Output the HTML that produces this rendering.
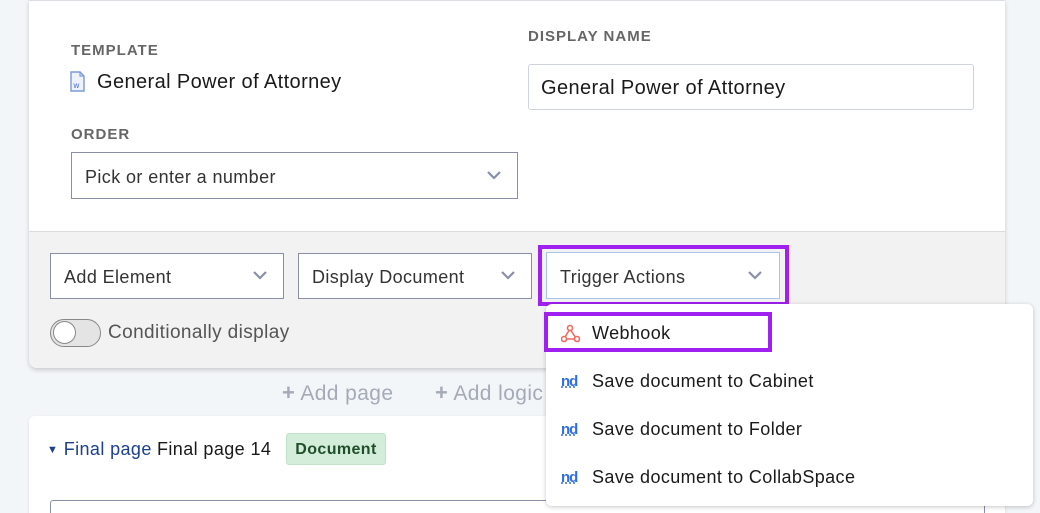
<!DOCTYPE html>
<html><head><meta charset="utf-8"><style>
*{box-sizing:border-box;margin:0;padding:0}
html,body{width:1040px;height:513px;overflow:hidden}
body{background:#f3f6f9;font-family:"Liberation Sans",sans-serif;position:relative;letter-spacing:0.4px}
.abs{position:absolute}
.lbl{font-size:15px;font-weight:bold;color:#666;letter-spacing:1px}
.sel{position:absolute;background:#fff;border:1px solid #8a8fa8;font-size:18px;color:#333;padding-left:13px;padding-top:3px;display:flex;align-items:center}
.chev{position:absolute;right:16px;top:50%;margin-top:-5px}
.item{position:absolute;left:15px;font-size:18px;color:#1a1a1a;display:flex;align-items:center}
.nd{font-size:15px;font-weight:bold;color:#2f6fe0;width:31px;letter-spacing:-1px;text-decoration:underline;text-decoration-style:dotted}
</style></head><body>
<div class="abs" style="left:29px;top:0;width:976px;height:368px;background:#fff;border-top:1px solid #dcdfe4;border-radius:0 0 8px 8px;box-shadow:0 2px 5px rgba(0,0,0,.18);overflow:hidden">
  <div class="abs" style="left:0;top:230px;width:976px;height:138px;background:#f2f2f2;border-top:1px solid #dcdcdc"></div>
</div>
<div class="abs lbl" style="left:71px;top:42px">TEMPLATE</div>
<svg class="abs" style="left:70px;top:71px" width="15" height="21" viewBox="0 0 15 21"><path d="M1 1h9l4 4v15H1z" fill="#eef3fb" stroke="#7a9ad6" stroke-width="1.4"/><path d="M10 1v4h4" fill="none" stroke="#7a9ad6" stroke-width="1.2"/><text x="3.5" y="17" font-size="8" fill="#3a6cc8" font-family="Liberation Sans">w</text></svg>
<div class="abs" style="left:97px;top:71px;font-size:20px;color:#1a1a1a">General Power of Attorney</div>
<div class="abs lbl" style="left:71px;top:126px">ORDER</div>
<div class="sel" style="left:71px;top:152px;width:447px;height:47px">Pick or enter a number<svg class="chev" width="14" height="9"><path d="M1 1l6 6 6-6" fill="none" stroke="#8a8fa8" stroke-width="2.2"/></svg></div>
<div class="abs lbl" style="left:528px;top:28px">DISPLAY NAME</div>
<div class="sel" style="left:528px;top:64px;width:446px;height:46px;border-color:#cfd3dc;border-radius:3px;font-size:20px;color:#1a1a1a;padding-left:12px">General Power of Attorney</div>

<div class="sel" style="left:50px;top:253px;width:234px;height:46px">Add Element<svg class="chev" width="14" height="9"><path d="M1 1l6 6 6-6" fill="none" stroke="#8a8fa8" stroke-width="2.2"/></svg></div>
<div class="sel" style="left:298px;top:253px;width:234px;height:46px">Display Document<svg class="chev" width="14" height="9"><path d="M1 1l6 6 6-6" fill="none" stroke="#8a8fa8" stroke-width="2.2"/></svg></div>
<div class="abs" style="left:538px;top:245px;width:251px;height:61px;border:4px solid #a020f0"></div>
<div class="sel" style="left:546px;top:252px;width:234px;height:47px;border-color:#a8c4ea">Trigger Actions<svg class="chev" style="right:17px" width="14" height="9"><path d="M1 1l6 6 6-6" fill="none" stroke="#8a8fa8" stroke-width="2.2"/></svg></div>

<div class="abs" style="left:50px;top:319px;width:51px;height:28px;border-radius:14px;background:#e4e4e4;border:1px solid #888"></div>
<div class="abs" style="left:53px;top:321px;width:23px;height:23px;border-radius:50%;background:#fff;border:1px solid #888"></div>
<div class="abs" style="left:108px;top:322px;font-size:19px;color:#555">Conditionally display</div>

<div class="abs" style="left:282px;top:380px;font-size:21px;color:#a4abb7"><b style="font-size:22px">+</b> Add page</div>
<div class="abs" style="left:435px;top:380px;font-size:21px;color:#a4abb7"><b style="font-size:22px">+</b> Add logic</div>

<div class="abs" style="left:29px;top:416px;width:976px;height:120px;background:#fff;border-radius:6px;box-shadow:0 1px 3px rgba(0,0,0,.1)"></div>
<div class="abs" style="left:47px;top:439px;font-size:18px;color:#1d3f8f"><span style="font-size:11px;vertical-align:2px">▼</span> Final page</div>
<div class="abs" style="left:157px;top:439px;font-size:18px;color:#1a1a1a">Final page 14</div>
<div class="abs" style="left:286px;top:433px;width:100px;height:32px;background:#d4ecda;border:1px solid #bfe2c8;border-radius:3px;font-size:16px;font-weight:bold;color:#1f4f2a;text-align:center;line-height:32px">Document</div>
<div class="abs" style="left:50px;top:500px;width:935px;height:30px;border:1px solid #8a8fa8;border-radius:3px"></div>

<div class="abs" style="left:546px;top:304px;width:487px;height:202px;background:#fff;border-radius:6px;box-shadow:0 1px 5px rgba(0,0,0,.22)">
  <div class="abs" style="left:-2px;top:8px;width:228px;height:40px;border:4px solid #a020f0"></div>
  <div class="item" style="top:19px"><svg width="31" height="20" viewBox="0 0 31 20"><g fill="none" stroke="#ef6b5f" stroke-width="1.6"><circle cx="9" cy="4" r="2.5"/><circle cx="3" cy="15" r="2.5"/><circle cx="16" cy="15" r="2.5"/><path d="M8 6.5L4 13M10 6.5l4.5 7M5.5 15h8"/></g></svg>Webhook</div>
  <div class="item" style="top:67px"><span class="nd">nd</span>Save document to Cabinet</div>
  <div class="item" style="top:115px"><span class="nd">nd</span>Save document to Folder</div>
  <div class="item" style="top:163px"><span class="nd">nd</span>Save document to CollabSpace</div>
</div>
</body></html>
